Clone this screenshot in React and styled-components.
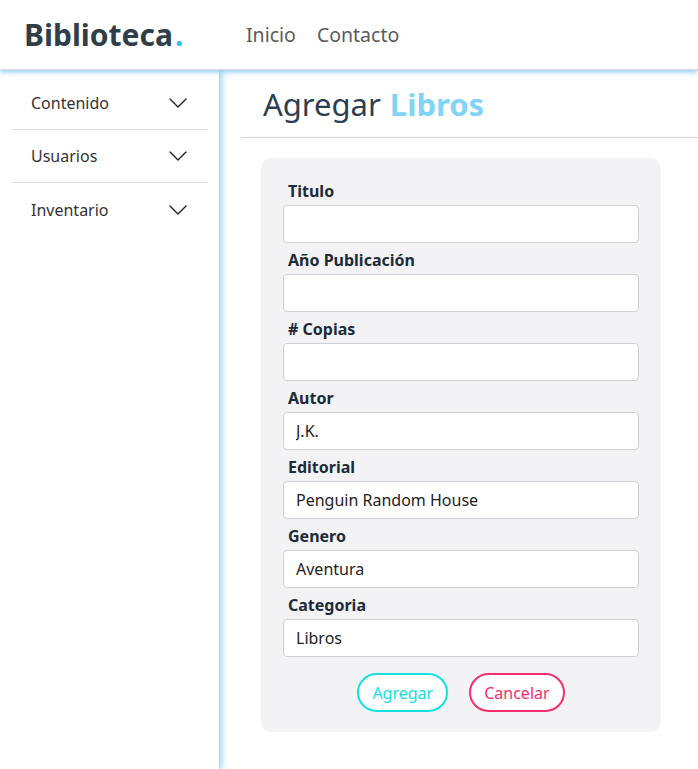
import styled, { createGlobalStyle } from "styled-components";

const GlobalStyle = createGlobalStyle`
  * { box-sizing: border-box; }
  body {
    margin: 0;
    font-family: "Noto Sans", "Open Sans", sans-serif;
    background: #fff;
  }
`;

const Page = styled.div`
  min-height: 100vh;
  display: flex;
  flex-direction: column;
`;

const Header = styled.header`
  height: 70px;
  display: flex;
  align-items: center;
  padding-left: 24px;
  border-bottom: 1px solid #dcdcdc;
  box-shadow: 0 2px 5px rgba(90, 180, 245, 0.7);
  position: relative;
  z-index: 2;
  background: #fff;
`;

const Logo = styled.div`
  font-size: 30px;
  font-weight: 700;
  color: #2f3e48;
  width: 222px;
  span {
    color: #2ec4f1;
    margin-left: 2px;
  }
`;

const Nav = styled.nav`
  display: flex;
  gap: 21px;
`;

const NavLink = styled.a`
  font-size: 19.5px;
  color: #5b5b5b;
  text-decoration: none;
`;

const Body = styled.div`
  flex: 1;
  display: flex;
`;

const Sidebar = styled.aside`
  width: 219px;
  flex-shrink: 0;
  padding: 7px 11px 0 11px;
  box-shadow: 2px 0 7px rgba(90, 180, 245, 0.75);
  position: relative;
  z-index: 1;
  background: #fff;
`;

const SideItem = styled.div`
  height: 53px;
  display: flex;
  align-items: center;
  justify-content: space-between;
  padding: 0 21px 0 20px;
  font-size: 16px;
  color: #333;
  border-bottom: ${(p) => (p.$last ? "none" : "1px solid #dedede")};
`;

const Main = styled.main`
  flex: 1;
  padding-left: 22px;
  padding-bottom: 37px;
`;

const Title = styled.h1`
  margin: 0;
  height: 68px;
  display: flex;
  align-items: center;
  padding-left: 22px;
  font-size: 31px;
  font-weight: 400;
  color: #2c3e50;
  border-bottom: 1px solid #d6d6d6;
  strong {
    color: #80d5f6;
    font-weight: 700;
    margin-left: 9px;
  }
`;

const Card = styled.form`
  margin: 20px 0 0 20px;
  width: 400px;
  background: #f3f3f5;
  border-radius: 10px;
  padding: 21px 22px 20px 22px;
  display: flex;
  flex-direction: column;
`;

const Label = styled.label`
  display: block;
  padding-left: 5px;
  font-size: 16px;
  font-weight: 700;
  color: #1c2b3a;
  line-height: 24px;
  margin-bottom: 2px;
`;

const Input = styled.input`
  width: 100%;
  height: 38px;
  border: 1px solid #cdd0d6;
  border-radius: 4px;
  background: #fff;
  padding: 0 12px;
  font-family: inherit;
  font-size: 16px;
  color: #222;
  margin-bottom: 5px;
  outline: none;
`;

const Actions = styled.div`
  display: flex;
  justify-content: center;
  gap: 21px;
  margin-top: 11px;
`;

const Button = styled.button`
  height: 39px;
  padding: 0 13px;
  border-radius: 20px;
  border: 2px solid ${(p) => p.$color};
  color: ${(p) => p.$color};
  background: #fff;
  font-family: inherit;
  font-size: 16px;
  cursor: pointer;
`;

const Chevron = () => (
  <svg width="18" height="10" viewBox="0 0 18 10" fill="none">
    <polyline points="1,1 9,9 17,1" stroke="#222" strokeWidth="1.4" strokeLinecap="round" strokeLinejoin="round" />
  </svg>
);

const fields = [
  { label: "Titulo", value: "" },
  { label: "Año Publicación", value: "" },
  { label: "# Copias", value: "" },
  { label: "Autor", value: "J.K." },
  { label: "Editorial", value: "Penguin Random House" },
  { label: "Genero", value: "Aventura" },
  { label: "Categoria", value: "Libros" },
];

const menu = ["Contenido", "Usuarios", "Inventario"];

export default function App() {
  return (
    <Page>
      <GlobalStyle />
      <Header>
        <Logo>
          Biblioteca<span>.</span>
        </Logo>
        <Nav>
          <NavLink href="#">Inicio</NavLink>
          <NavLink href="#">Contacto</NavLink>
        </Nav>
      </Header>
      <Body>
        <Sidebar>
          {menu.map((m, i) => (
            <SideItem key={m} $last={i === menu.length - 1}>
              {m}
              <Chevron />
            </SideItem>
          ))}
        </Sidebar>
        <Main>
          <Title>
            Agregar<strong>Libros</strong>
          </Title>
          <Card onSubmit={(e) => e.preventDefault()}>
            {fields.map((f) => (
              <div key={f.label}>
                <Label>{f.label}</Label>
                <Input defaultValue={f.value} />
              </div>
            ))}
            <Actions>
              <Button type="submit" $color="#14e0e3">Agregar</Button>
              <Button type="button" $color="#fb2c6c">Cancelar</Button>
            </Actions>
          </Card>
        </Main>
      </Body>
    </Page>
  );
}
